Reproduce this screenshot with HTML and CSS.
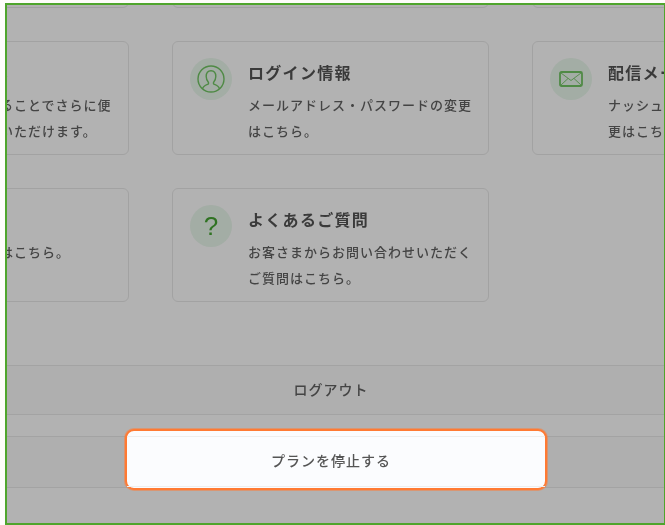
FILE: index.html
```html
<!DOCTYPE html>
<html lang="ja">
<head>
  <meta charset="UTF-8" />
  <meta name="viewport" content="width=device-width, initial-scale=1.0"/>
  <title>マイページ</title>
  <link rel="stylesheet" href="styles.css">
</head>
<body>
  <div class="frame">
    <div class="card-grid">
      <div class="card"></div>
      <div class="card"></div>
      <div class="card"></div>

      <div class="card">
        <div class="icon-circle"></div>
        <div class="card-body">
          <h3>アカウント連携</h3>
          <p>アカウント連携することでさらに便利にアプリを利用いただけます。</p>
        </div>
      </div>
      <div class="card">
        <div class="icon-circle">
          <svg width="28" height="28" viewBox="0 0 28 28" fill="none" stroke="#4f8a45" stroke-width="1.400">
            <circle cx="14" cy="14" r="13"/>
            <path d="M5.500 24c.6-3 3-3.800 5.200-4.600 1-.4 1.100-1.600.5-2.400-1.300-1.600-2-3.200-2-5.400C9.200 8 11 5.800 14 5.800s4.800 2.200 4.800 5.800c0 2.200-.7 3.800-2 5.400-.6.8-.5 2 .5 2.400 2.200.8 4.600 1.600 5.200 4.600"/>
          </svg>
        </div>
        <div class="card-body">
          <h3>ログイン情報</h3>
          <p>メールアドレス・パスワードの変更はこちら。</p>
        </div>
      </div>
      <div class="card">
        <div class="icon-circle">
          <svg width="24" height="16" viewBox="0 0 24 16" fill="none" stroke="#4f8a45">
            <rect x="1" y="1" width="22" height="14" rx="1.500" stroke-width="1.800"/>
            <path d="M2 2l10 7.500L22 2M2 14l7-6.500M22 14l-7-6.500" stroke-width=".9"/>
          </svg>
        </div>
        <div class="card-body">
          <h3>配信メール設定</h3>
          <p>ナッシュからのメール配信設定の変更はこちら。</p>
        </div>
      </div>

      <div class="card">
        <div class="icon-circle"></div>
        <div class="card-body">
          <h3>ご契約内容</h3>
          <p>ご契約内容の確認はこちら。</p>
        </div>
      </div>
      <div class="card">
        <div class="icon-circle"><span class="question">?</span></div>
        <div class="card-body">
          <h3>よくあるご質問</h3>
          <p>お客さまからお問い合わせいただくご質問はこちら。</p>
        </div>
      </div>
    </div>

    <div class="menu">
      <div class="menu-row">ログアウト</div>
      <div class="menu-row"></div>
    </div>

    <div class="highlight">
      <div class="highlight-row">プランを停止する</div>
    </div>
  </div>
</body>
</html>
```

FILE: styles.css
```css
* {
  box-sizing: border-box;
  margin: 0;
  padding: 0;
}

html, body {
  height: 100%;
  overflow: hidden;
}

body {
  background-color: #fdfdfa;
  font-family: "Noto Sans CJK JP", "Noto Sans", sans-serif;
  color: #444;
}

.frame {
  position: relative;
  width: 660px;
  height: 522px;
  margin: 3px 0 0 5px;
  border: 2px solid #4fa52c;
  border-right-width: 1px;
  background-color: #b2b2b2;
  overflow: hidden;
}

.card-grid {
  display: grid;
  grid-template-columns: repeat(3, 317px);
  grid-auto-rows: 114px;
  gap: 33px 43px;
  margin: -111px 0 0 -195px;
  filter: blur(0.4px);
}

.card {
  display: flex;
  gap: 16px;
  padding: 16px 17px;
  border: 1px solid #a2a2a2;
  border-radius: 6px;
}

.icon-circle {
  flex: none;
  display: flex;
  align-items: center;
  justify-content: center;
  width: 42px;
  height: 42px;
  border-radius: 50%;
  background-color: #a3ada5;
}

.question {
  font-family: "Liberation Sans", sans-serif;
  font-size: 26px;
  color: #2f7322;
}

.card-body {
  min-width: 0;
}

.card-body h3 {
  margin-top: 1px;
  font-size: 16px;
  font-weight: 700;
  line-height: 26px;
  letter-spacing: 1.300px;
  color: #3a3a3a;
  white-space: nowrap;
}

.card-body p {
  margin-top: 7px;
  font-size: 13px;
  font-weight: 500;
  line-height: 26px;
  letter-spacing: 1px;
  width: 226px;
}

.menu {
  display: flex;
  flex-direction: column;
  gap: 21px;
  margin-top: 63px;
}

.menu-row {
  height: 50px;
  padding-right: 9px;
  border-top: 1px solid #a3a3a3;
  border-bottom: 1px solid #a3a3a3;
  background-color: #afafaf;
  text-align: center;
  font-size: 14px;
  font-weight: 500;
  line-height: 47px;
  letter-spacing: 1px;
  filter: blur(0.4px);
}

.menu-row + .menu-row {
  height: 52px;
}

/* sits over the second menu row */
.highlight {
  position: absolute;
  top: 424px;
  left: 118px;
  width: 422px;
  height: 61px;
  padding-top: 5px;
  border: 2px solid #ff7a33;
  border-radius: 9px;
  box-shadow: 0 0 0 1px rgba(255, 122, 51, 0.5);
  background-color: #fbfcfe;
}

.highlight-row {
  height: 51px;
  padding-right: 10px;
  border-top: 1px solid #eeeeee;
  border-bottom: 1px solid #eeeeee;
  text-align: center;
  font-size: 14px;
  font-weight: 500;
  line-height: 46px;
  letter-spacing: 1px;
  color: #555;
  filter: blur(0.4px);
}
```
